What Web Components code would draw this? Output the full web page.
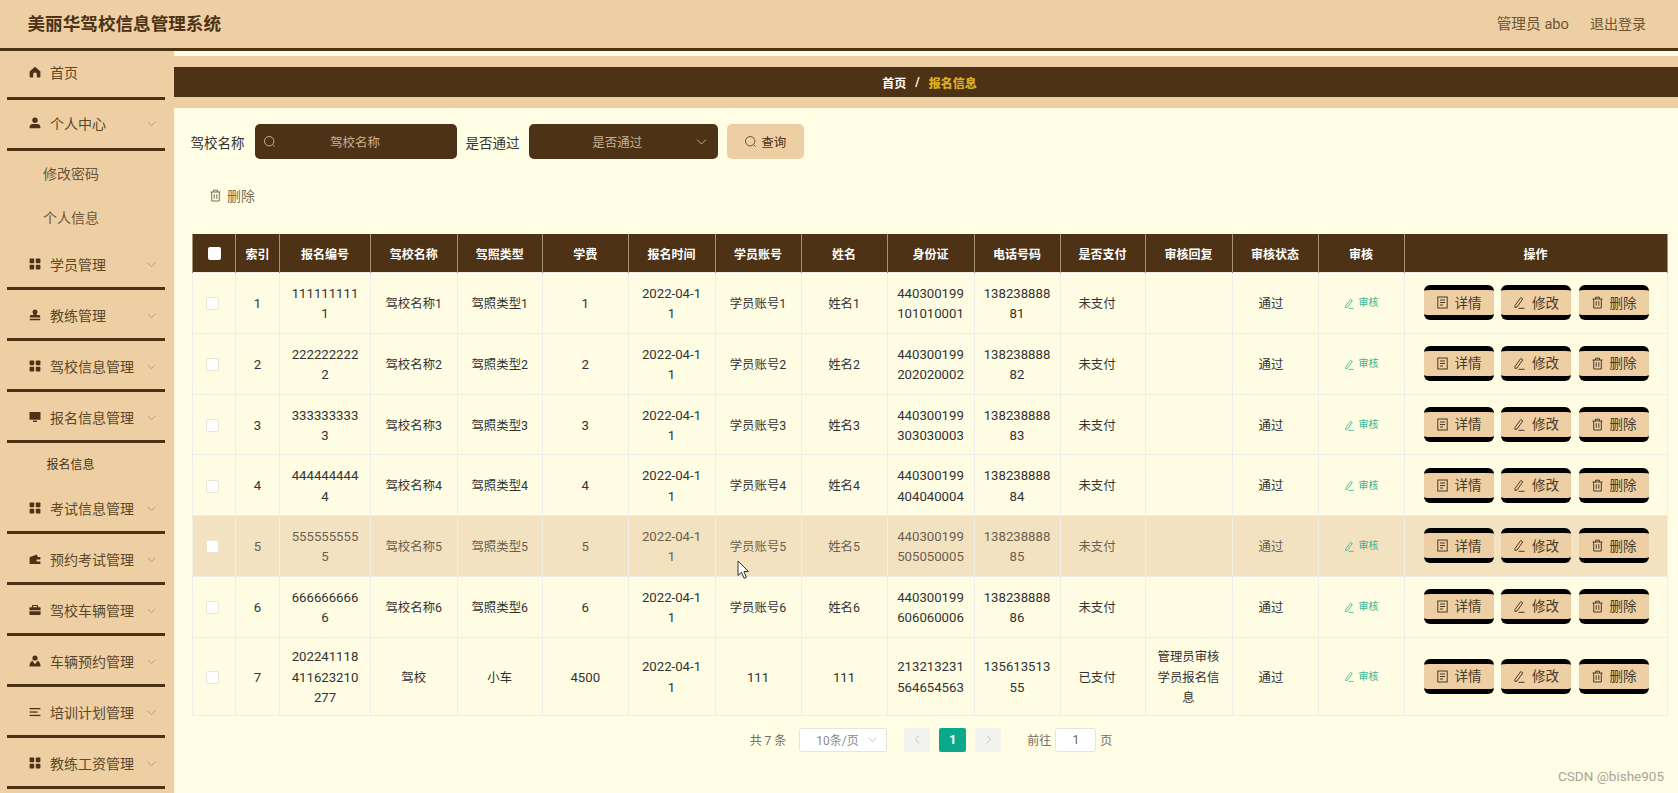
<!DOCTYPE html>
<html lang="zh">
<head>
<meta charset="utf-8">
<title>美丽华驾校信息管理系统</title>
<style>
  html, body { margin: 0; height: 100%; overflow: hidden; background: #fffde3; }
  body { font-family: Roboto, "Noto Sans CJK SC", sans-serif; }
</style>
</head>
<body>
<admin-page></admin-page>
<script>
const ICONS = {
  home: '<path d="M6 .8.6 5.6v5c0 .5.3.8.8.8h2.800V8.200c0-1 .8-1.800 1.800-1.800s1.800.8 1.800 1.800v3.200h2.800c.5 0 .8-.3.8-.8v-5z"/>',
  user: '<circle cx="6" cy="3.200" r="2.700"/><path d="M.6 11.200V9.800c0-1.700 1.500-2.800 3-2.800h4.800c1.500 0 3 1.100 3 2.800v1.400z"/>',
  stamp: '<path d="M6 .6c-1.500 0-2.500 1-2.500 2.300 0 1.200 1 1.700 1 3.100H2.200C1.300 6 .8 6.600.8 7.400v1.200h10.400V7.400c0-.8-.5-1.400-1.400-1.400H7.500c0-1.400 1-1.900 1-3.100C8.500 1.600 7.500.6 6 .6zM.8 9.700h10.400v1.500H.8z"/>',
  grid: '<rect x=".6" y=".6" width="4.600" height="4.600" rx=".6"/><rect x="6.800" y=".6" width="4.600" height="4.600" rx=".6"/><rect x=".6" y="6.800" width="4.600" height="4.600" rx=".6"/><rect x="6.800" y="6.800" width="4.600" height="4.600" rx=".6"/>',
  monitor: '<rect x=".5" y="1" width="11" height="7.800" rx=".5"/><rect x="4" y="9.600" width="4" height="1.400"/>',
  wallet: '<path d="M.6 4.200 7.800 1.400l1 2.600H11.400v2.400H8.600c-.8 0-1.200.5-1.200 1.100s.4 1.100 1.200 1.100h2.800V11H.6z"/>',
  case: '<path d="M4 1h4c.6 0 1 .4 1 1v1.200h2c.4 0 .6.300.6.700v2.400H.4V3.900c0-.4.2-.7.6-.7h2V2c0-.6.4-1 1-1zm.2 1.100v1.100h3.600V2.100zM.4 7.300h11.200v3c0 .4-.3.7-.7.7H1.100c-.4 0-.7-.3-.7-.7z"/>',
  person: '<circle cx="6" cy="3" r="2.600"/><path d="M3.400 5.800C1.800 6.600.6 8.500.4 11.400h11.200c-.2-2.900-1.400-4.800-3-5.600L6 9.200z"/>',
  lines: '<rect x=".6" y="2" width="10.800" height="1.300"/><rect x=".6" y="5.400" width="8" height="1.300"/><rect x=".6" y="8.800" width="10.800" height="1.300"/>'
};
const LINE_ICONS = {
  search: '<circle cx="6.200" cy="6.200" r="4.700"/><path d="m9.700 9.700 1.800 1.800"/>',
  trash: '<path d="M1.500 3h10M4.500 3V1.200h4V3M2.700 3v9h7.600V3M5.200 5.200v4.600M7.800 5.200v4.600"/>',
  doc: '<rect x="1.800" y="1" width="9.400" height="11"/><path d="M4 4h5M4 6.500h5M4 9h3"/>',
  pen: '<path d="M2 9.500 7.800 1.500l2 1.400L4 11 2 11.500zM5.500 12.300h6"/>',
  down: '<path d="m2 4.500 4.500 4.500L11 4.500"/>',
  left: '<path d="M8.500 2 4 6.500 8.500 11"/>',
  right: '<path d="m4.500 2 4.500 4.500L4.500 11"/>'
};
function lineIcon(name, size, color) {
  return `<svg width="${size}" height="${size}" viewBox="0 0 13 13" fill="none" stroke="${color}" stroke-width="1">${LINE_ICONS[name]}</svg>`;
}

class AppHeader extends HTMLElement {
  constructor() {
    super();
    this.attachShadow({ mode: 'open' });
    this.shadowRoot.innerHTML = `
    <style>
      :host { display: flex; align-items: center; justify-content: space-between; box-sizing: border-box;
        height: 51px; padding: 0 32px 3px 27.500px; background: #edcfa3; border-bottom: 3px solid #4e3216; }
      h1 { margin: 0; font-size: 17.600px; font-weight: 700; color: #4e3216; }
      div { display: flex; align-items: center; gap: 21px; font-size: 14px; color: #6e5536; }
      .name { font-size: 14.700px; }
    </style>
    <h1>美丽华驾校信息管理系统</h1>
    <div><span class="name">管理员 abo</span><span>退出登录</span></div>`;
  }
}

class MenuItem extends HTMLElement {
  constructor() {
    super();
    this.attachShadow({ mode: 'open' });
  }
  connectedCallback() {
    const icon = this.getAttribute('icon');
    const arrow = this.hasAttribute('arrow');
    this.shadowRoot.innerHTML = `
    <style>
      :host { display: block; }
      .row { display: flex; align-items: center; box-sizing: border-box; height: 51px; margin: 0 9px 0 7px;
        padding: 2px 0 0 22px; border-bottom: 3px solid #4e3216; font-size: 14px; color: #5c4729; }
      :host([first]) .row { height: 49px; padding-top: 0; padding-bottom: 5px; }
      :host([tight]) .row { padding-top: 0; padding-bottom: 2px; }
      svg.ic { width: 12px; height: 12px; fill: #4e3216; margin-right: 9px; flex: none; }
      .arrow { margin-left: auto; margin-right: 8px; display: flex; }
    </style>
    <div class="row">
      <svg class="ic" viewBox="0 0 12 12">${ICONS[icon]}</svg>
      <span>${this.getAttribute('label')}</span>
      ${arrow ? `<span class="arrow">${lineIcon('down', 11, '#ac9573')}</span>` : ''}
    </div>
    <slot></slot>`;
  }
}

class SubItem extends HTMLElement {
  constructor() {
    super();
    this.attachShadow({ mode: 'open' });
    this.shadowRoot.innerHTML = `
    <style>
      :host { display: flex; align-items: center; box-sizing: border-box; height: 44px; padding-left: 43px;
        font-size: 14px; color: #6e5536; }
      :host([active]) { height: 40px; padding-left: 46.500px; font-size: 12px; color: #4e3216; }
    </style>
    <slot></slot>`;
  }
}

class SideMenu extends HTMLElement {
  constructor() {
    super();
    this.attachShadow({ mode: 'open' });
    this.shadowRoot.innerHTML = `
    <style>
      :host { display: block; flex: none; width: 174px; background: #edcfa3; overflow: hidden; }
    </style>
    <menu-item first icon="home" label="首页"></menu-item>
    <menu-item tight arrow icon="user" label="个人中心">
      <sub-item>修改密码</sub-item>
      <sub-item>个人信息</sub-item>
    </menu-item>
    <menu-item arrow icon="grid" label="学员管理"></menu-item>
    <menu-item arrow icon="stamp" label="教练管理"></menu-item>
    <menu-item arrow icon="grid" label="驾校信息管理"></menu-item>
    <menu-item arrow icon="monitor" label="报名信息管理">
      <sub-item active>报名信息</sub-item>
    </menu-item>
    <menu-item arrow icon="grid" label="考试信息管理"></menu-item>
    <menu-item arrow icon="wallet" label="预约考试管理"></menu-item>
    <menu-item arrow icon="case" label="驾校车辆管理"></menu-item>
    <menu-item arrow icon="person" label="车辆预约管理"></menu-item>
    <menu-item arrow icon="lines" label="培训计划管理"></menu-item>
    <menu-item arrow icon="grid" label="教练工资管理"></menu-item>`;
  }
}

class BreadCrumb extends HTMLElement {
  constructor() {
    super();
    this.attachShadow({ mode: 'open' });
    this.shadowRoot.innerHTML = `
    <style>
      :host { display: block; margin-top: 5px; padding: 11px 0; background: #edcfa3; }
      div { display: flex; align-items: center; justify-content: center; gap: 9px; height: 30px; padding-left: 7px;
        background: #4e3216; font-size: 12px; font-weight: 700; color: #fff; }
      b { color: #dcae1d; }
    </style>
    <div><span>首页</span><span>/</span><b>报名信息</b></div>`;
  }
}

class DarkField extends HTMLElement {
  constructor() {
    super();
    this.attachShadow({ mode: 'open' });
  }
  connectedCallback() {
    const select = this.hasAttribute('select');
    this.shadowRoot.innerHTML = `
    <style>
      :host { display: flex; align-items: center; box-sizing: border-box; height: 35px; padding: 0 10px 0 8px;
        background: #4e3216; border-radius: 5px; font-size: 12.500px; color: #c6b08e; }
      span { flex: 1; text-align: center; }
      :host(:not([select])) span { margin-right: 13px; }
      :host([select]) span { margin-left: 3px; }
      svg { flex: none; }
    </style>
    ${select ? '' : lineIcon('search', 13, '#c6b08e')}
    <span><slot></slot></span>
    ${select ? lineIcon('down', 13, '#c6b08e') : ''}`;
  }
}

class SearchBar extends HTMLElement {
  constructor() {
    super();
    this.attachShadow({ mode: 'open' });
    this.shadowRoot.innerHTML = `
    <style>
      :host { display: block; padding-top: 16px; }
      .search { display: flex; align-items: center; height: 35px; margin-left: -1.500px; font-size: 13.500px; color: #333; }
      dark-field.a { width: 202px; margin: 0 8.500px 0 10.500px; }
      dark-field.b { width: 189.500px; margin: 0 8.700px 0 9px; }
      .query { display: flex; align-items: center; justify-content: center; gap: 4px; width: 77px; height: 35px;
        background: #edcfa3; border-radius: 5px; font-size: 12.500px; color: #4e3216; }
      .tools { display: flex; align-items: center; gap: 5px; height: 34px; margin: 19px 0 22px; padding-left: 17px;
        font-size: 14px; color: #7c6d52; }
    </style>
    <div class="search">
      <span>驾校名称</span>
      <dark-field class="a">驾校名称</dark-field>
      <span>是否通过</span>
      <dark-field class="b" select>是否通过</dark-field>
      <div class="query">${lineIcon('search', 13, '#6e5536')}<span>查询</span></div>
    </div>
    <div class="tools">${lineIcon('trash', 13, '#7c6d52')}<span>删除</span></div>`;
  }
}

class ActionButton extends HTMLElement {
  constructor() {
    super();
    this.attachShadow({ mode: 'open' });
  }
  connectedCallback() {
    this.shadowRoot.innerHTML = `
    <style>
      :host { display: flex; align-items: center; justify-content: center; gap: 6px; box-sizing: border-box;
        width: 70px; height: 35px; background: #edcfa3; border-top: 5px solid #000; border-bottom: 5px solid #000;
        border-radius: 6px; font-size: 13.500px; letter-spacing: 0; color: #4a3b28; }
    </style>
    ${lineIcon(this.getAttribute('icon'), 13, '#4a3b28')}<slot></slot>`;
  }
}

class DataTable extends HTMLElement {
  constructor() {
    super();
    this.attachShadow({ mode: 'open' });
  }
  connectedCallback() {
    const widths = [43, 44, 91, 86.5, 85.5, 85.5, 87, 86, 86, 87, 86, 85, 87, 86, 86, 263];
    const heads = ['', '索引', '报名编号', '驾校名称', '驾照类型', '学费', '报名时间', '学员账号', '姓名', '身份证', '电话号码', '是否支付', '审核回复', '审核状态', '审核', '操作'];
    const date = '2022-04-1<br>1';
    const rows = [1, 2, 3, 4, 5, 6].map(n => [
      String(n).repeat(10), '驾校名称' + n, '驾照类型' + n, n, date, '学员账号' + n, '姓名' + n,
      '440300199' + n + '0' + n + '0' + n + '000' + n, '1382388888' + n, '未支付', ''
    ]);
    rows.push(['202241118411623210277', '驾校', '小车', 4500, date, 111, 111, '213213231564654563', '13561351355', '已支付', '管理员审核学员报名信息']);

    const isNum = v => /^[\d-]+(<br>\d)?$/.test(String(v));
    const cellClass = v => (isNum(v) ? 'num' : /支付$/.test(v) ? 'pay' : '');
    const body = rows.map((r, i) => `
      <tr class="${i === 4 ? 'hover' : ''} ${i === 6 ? 'tall' : ''}">
        <td><span class="check"></span></td>
        <td class="num">${i + 1}</td>
        ${r.map(v => `<td class="${cellClass(v)}">${v}</td>`).join('')}
        <td class="state">通过</td>
        <td><span class="audit">${lineIcon('pen', 11, '#3ab598')}审核</span></td>
        <td><div class="ops">
          <action-button icon="doc">详情</action-button>
          <action-button icon="pen">修改</action-button>
          <action-button icon="trash">删除</action-button>
        </div></td>
      </tr>`).join('');

    this.shadowRoot.innerHTML = `
    <style>
      :host { display: block; }
      table { width: 100%; table-layout: fixed; border-collapse: collapse; font-size: 12.400px; color: #333; }
      th { height: 38px; padding: 0; background: #4e3216; border: 1px solid #a3927c; border-top: 0; border-bottom: 0;
        font-size: 12px; color: #fff; font-weight: 700; }
      td { height: 60.750px; padding: 3px 8.500px 0; box-sizing: border-box; border: 1px solid #eeeee6; background: #fefce3;
        text-align: center; line-height: 20.300px; word-break: break-all; }
      td.num { font-size: 13.200px; }
      td.pay { padding-right: 19.500px; }
      td.state { padding-right: 16.500px; }
      tr.tall td { height: 78.300px; }
      tr.hover td { background: #f3e2c0; color: #6b6050; }
      td:nth-child(2) { padding-left: 0; padding-right: 0; }
      td:first-child { padding: 2px 0 0; }
      td:last-child { padding: 0; }
      .check { display: block; width: 13px; height: 13px; margin: 0 auto 0 13px; background: #fff; border: 1px solid #e8e6d8; border-radius: 2px; box-sizing: border-box; }
      .check.head { width: 13px; height: 13px; margin-left: 15px; border: 0; }
      .audit { display: inline-flex; align-items: center; gap: 4px; font-size: 10px; color: #3ab598; }
      .ops { display: flex; gap: 7.500px; padding-left: 19px; }
    </style>
    <table>
      <colgroup>${widths.map(w => `<col style="width:${w}px">`).join('')}</colgroup>
      <thead><tr>${heads.map((h, i) => `<th>${i ? h : '<span class="check head"></span>'}</th>`).join('')}</tr></thead>
      <tbody>${body}</tbody>
    </table>`;
  }
}

class PagerBar extends HTMLElement {
  constructor() {
    super();
    this.attachShadow({ mode: 'open' });
    this.shadowRoot.innerHTML = `
    <style>
      :host { display: flex; align-items: center; justify-content: center; height: 24px; margin-top: 12px; padding-left: 3px; font-size: 12px; color: #6f6f66; }
      .size, .go { display: flex; align-items: center; box-sizing: border-box; height: 24px; background: #fff; border: 1px solid #e4e4e0; border-radius: 3px; }
      .size { justify-content: space-between; width: 88px; margin: 0 17px 0 13px; padding: 0 8px 0 16px; color: #8a8a86; }
      .btn { display: flex; align-items: center; justify-content: center; width: 26px; height: 24px; background: #f2f2ee; border-radius: 2px; }
      .on { width: 27px; margin: 0 9px; background: #0aa98c; color: #fff; font-weight: 700; font-size: 13px; }
      .go { justify-content: center; width: 41px; margin: 0 4px; color: #6f6f66; font-size: 13px; }
      .to { margin-left: 26px; }
    </style>
    <span>共 7 条</span>
    <div class="size"><span>10条/页</span>${lineIcon('down', 11, '#bbb')}</div>
    <div class="btn">${lineIcon('left', 11, '#bdbdb8')}</div>
    <div class="btn on">1</div>
    <div class="btn">${lineIcon('right', 11, '#bdbdb8')}</div>
    <span class="to">前往</span>
    <div class="go">1</div>
    <span>页</span>`;
  }
}

class AdminPage extends HTMLElement {
  constructor() {
    super();
    this.attachShadow({ mode: 'open' });
    this.shadowRoot.innerHTML = `
    <style>
      :host { display: flex; flex-direction: column; position: relative; height: 793px; overflow: hidden; background: #fffde3; }
      .layout { display: flex; flex: 1; min-height: 0; }
      main { flex: 1; min-width: 0; }
      .content { padding: 0 11px 0 18px; }
      .mark { position: absolute; right: 14px; bottom: 9px; font-size: 13.500px; color: #a8a49a; }
      .cursor { position: absolute; left: 737px; top: 560px; }
    </style>
    <app-header></app-header>
    <div class="layout">
      <side-menu></side-menu>
      <main>
        <bread-crumb></bread-crumb>
        <div class="content">
          <search-bar></search-bar>
          <data-table></data-table>
          <pager-bar></pager-bar>
        </div>
      </main>
    </div>
    <svg class="cursor" width="13" height="20" viewBox="0 0 13 20"><path d="M1 1v14.500l3.500-3.200 2.500 6 2.400-1-2.500-5.800h4.600z" fill="#fff" stroke="#333" stroke-width="1"/></svg>
    <span class="mark">CSDN @bishe905</span>`;
  }
}

customElements.define('app-header', AppHeader);
customElements.define('menu-item', MenuItem);
customElements.define('sub-item', SubItem);
customElements.define('side-menu', SideMenu);
customElements.define('bread-crumb', BreadCrumb);
customElements.define('dark-field', DarkField);
customElements.define('search-bar', SearchBar);
customElements.define('action-button', ActionButton);
customElements.define('data-table', DataTable);
customElements.define('pager-bar', PagerBar);
customElements.define('admin-page', AdminPage);
</script>
</body>
</html>
